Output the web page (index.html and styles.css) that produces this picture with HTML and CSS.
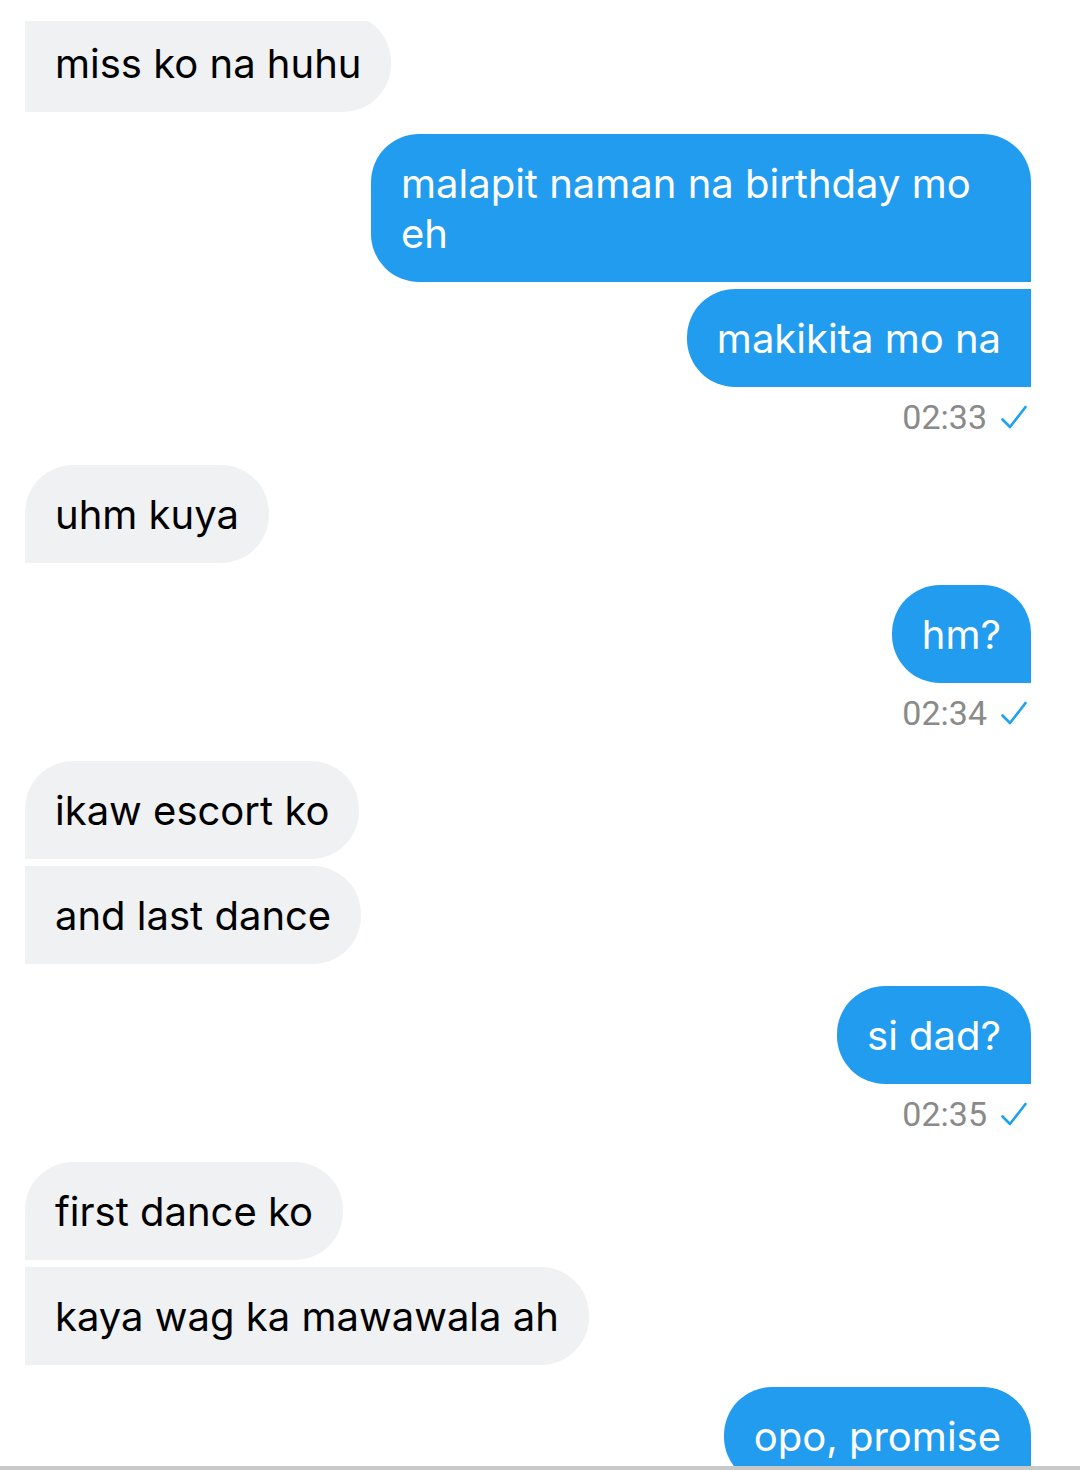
FILE: index.html
```html
<!DOCTYPE html>
<html lang="tl">
<head>
<meta charset="utf-8">
<title>Messages</title>
<link rel="stylesheet" href="styles.css">
</head>
<body>
<div class="viewport">
  <div class="list">
    <div class="group in">
      <div class="bubble last">miss ko na huhu</div>
    </div>
    <div class="group out">
      <div class="bubble first">malapit naman na birthday mo eh</div>
      <div class="bubble last">makikita mo na</div>
      <div class="meta"><span class="time">02:33</span><svg class="check" viewBox="0 0 26 24"><path d="M1.5 14.5 L9 22 L24.5 2"/></svg></div>
    </div>
    <div class="group in">
      <div class="bubble first last">uhm kuya</div>
    </div>
    <div class="group out">
      <div class="bubble first last">hm?</div>
      <div class="meta"><span class="time">02:34</span><svg class="check" viewBox="0 0 26 24"><path d="M1.5 14.5 L9 22 L24.5 2"/></svg></div>
    </div>
    <div class="group in">
      <div class="bubble first">ikaw escort ko</div>
      <div class="bubble last">and last dance</div>
    </div>
    <div class="group out">
      <div class="bubble first last">si dad?</div>
      <div class="meta"><span class="time">02:35</span><svg class="check" viewBox="0 0 26 24"><path d="M1.5 14.5 L9 22 L24.5 2"/></svg></div>
    </div>
    <div class="group in">
      <div class="bubble first">first dance ko</div>
      <div class="bubble last">kaya wag ka mawawala ah</div>
    </div>
    <div class="group out">
      <div class="bubble first last">opo, promise</div>
    </div>
  </div>
</div>
<div class="bottom-line"></div>
</body>
</html>
```

FILE: styles.css
```css
html, body {
  margin: 0;
  padding: 0;
  background: #ffffff;
}
body {
  width: 1080px;
  height: 1470px;
  overflow: hidden;
  font-family: "Inter", "Roboto", "Liberation Sans", sans-serif;
}
.viewport {
  margin-top: 21px;
  height: 1445px;
  overflow: hidden;
}
.list {
  margin-top: -7px;
  display: flex;
  flex-direction: column;
  gap: 22px;
  padding: 0 49px 0 25px;
}
.group {
  display: flex;
  flex-direction: column;
  gap: 7px;
}
.group.in { align-items: flex-start; }
.group.out { align-items: flex-end; }
.bubble {
  box-sizing: border-box;
  max-width: 660px;
  padding: 25px 30px 23px;
  font-size: 40px;
  line-height: 50px;
  border-radius: 48px;
}
.in .bubble {
  background: #eff1f3;
  color: #000000;
  border-top-left-radius: 0;
  border-bottom-left-radius: 0;
}
.in .bubble.first { border-top-left-radius: 48px; }
.out .bubble {
  background: #229cef;
  color: #ffffff;
  border-top-right-radius: 0;
  border-bottom-right-radius: 0;
}
.out .bubble.first { border-top-right-radius: 48px; }
.meta {
  display: flex;
  align-items: center;
  gap: 14px;
  height: 40px;
  margin-top: 3px;
  margin-bottom: 6px;
  padding-right: 4px;
}
.time {
  font-family: "Roboto", "Liberation Sans", sans-serif;
  font-size: 34px;
  color: #8a8a8a;
  line-height: 40px;
}
.check {
  width: 26px;
  height: 24px;
  fill: none;
  stroke: #1da1f2;
  stroke-width: 2.6;
  stroke-linecap: round;
  stroke-linejoin: round;
}
.bottom-line {
  height: 4px;
  background: #c8c8c8;
}
```
